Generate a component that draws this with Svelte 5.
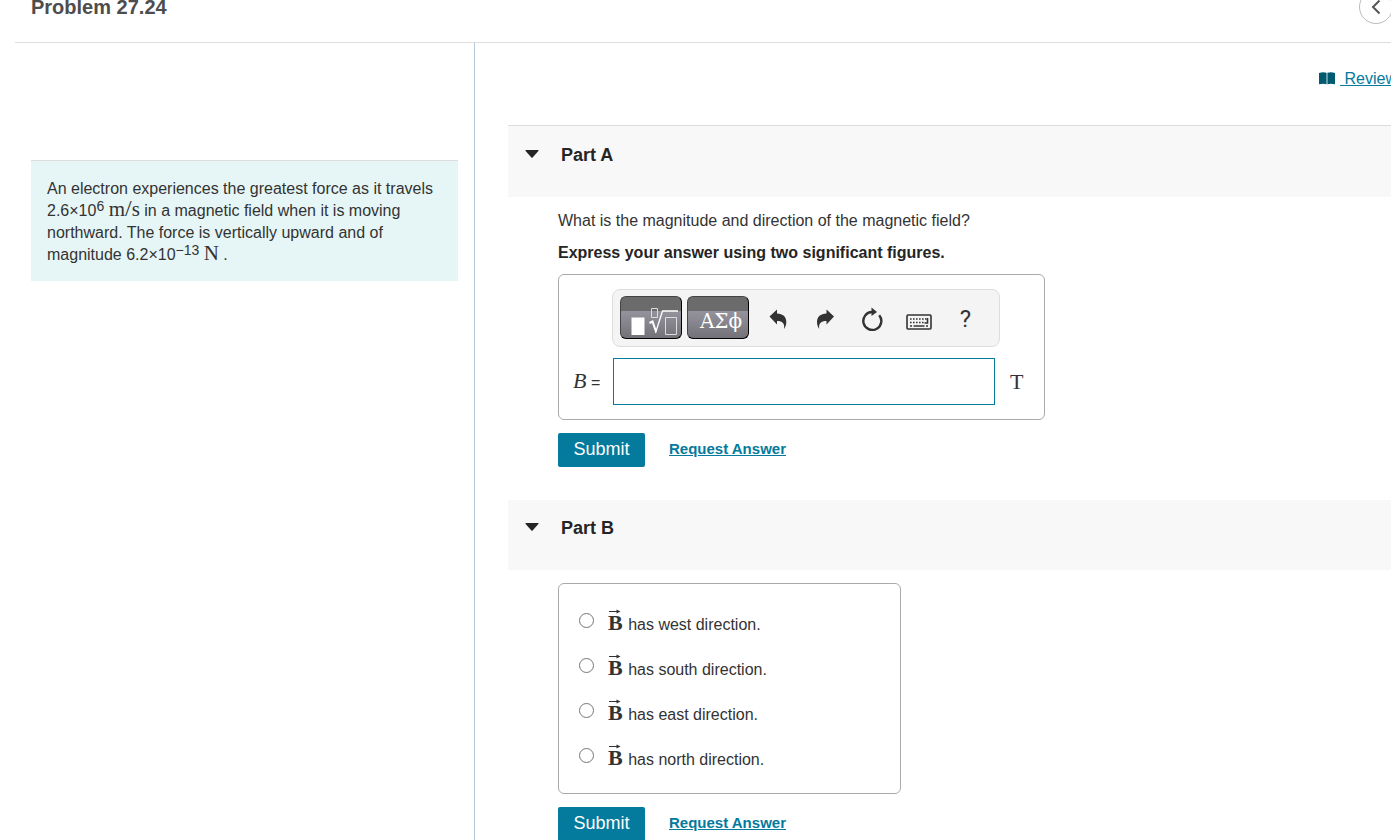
<script lang="ts">
  const directions = ['west', 'south', 'east', 'north'];

  let answer = $state('');
  let direction = $state('');
  let openA = $state(true);
  let openB = $state(true);
</script>

{#snippet partHeader(title: string, open: boolean, toggle: () => void)}
  <h2 class="part-header">
    <button type="button" class="part-toggle" aria-expanded={open} onclick={toggle}>
      <svg class="caret" width="14" height="8" viewBox="0 0 14 8" aria-hidden="true">
        <path d="M1 0h12q1 .2 .4 1L7.600 7.500q-.6.6-1.200 0L.6 1Q0 .2 1 0z" fill="currentColor" />
      </svg>
      {title}
    </button>
  </h2>
{/snippet}

{#snippet actions()}
  <div class="actions">
    <button type="submit" class="submit">Submit</button>
    <a href="#request" class="request">Request Answer</a>
  </div>
{/snippet}

<div class="page">
  <header class="top">
    <h1>Problem 27.24</h1>
    <button type="button" class="prev" aria-label="Previous problem">
      <svg width="10" height="16" viewBox="0 0 10 16" fill="none" stroke="currentColor" stroke-width="2">
        <path d="M8.500 1.500 2 8l6.500 6.500" />
      </svg>
    </button>
  </header>

  <div class="columns">
    <aside>
      <p class="statement">
        An electron experiences the greatest force as it travels 2.6×10<sup>6</sup>
        <span class="math">m<span class="slash">/</span>s</span> in a magnetic field when it is moving northward. The force is vertically
        upward and of magnitude 6.2×10<sup>−13</sup> <span class="math">N</span> .
      </p>
    </aside>

    <main>
      <div class="review">
        <svg width="16" height="13" viewBox="0 0 16 13" aria-hidden="true">
          <path d="M0 1Q4-.4 7.600 .8v11.400Q4 11.300 0 12.300zM16 1Q12-.4 8.400 .8v11.400Q12 11.300 16 12.300z" fill="#005a70" />
        </svg>
        <a href="#review">&nbsp;Review</a>
      </div>

      <section class="part first">
        {@render partHeader('Part A', openA, () => (openA = !openA))}
        {#if openA}
          <form class="part-body" onsubmit={(e) => e.preventDefault()}>
            <p>What is the magnitude and direction of the magnetic field?</p>
            <p class="hint">Express your answer using two significant figures.</p>
            <div class="answer-box">
              <div class="toolbar">
                <button type="button" class="palette" aria-label="Templates">
                  <svg width="60" height="41" viewBox="0 0 60 41" fill="none" stroke="#fff">
                    <path d="M10.500 20.500h13v17.500h-13z" fill="#fff" stroke="none" />
                    <path d="M30.500 11.500h6v9h-6z" stroke="#ddd" />
                    <path d="M28.500 26l3-1.500 3.500 10" stroke-width="2" />
                    <path d="M34.500 36 41.500 14H57" stroke-width="1.300" />
                    <path d="M44.500 20.500h11v17h-11z" stroke="#ddd" />
                  </svg>
                </button>
                <button type="button" class="palette greek" aria-label="Symbols">ΑΣϕ</button>
                <button type="button" class="tool" aria-label="Undo">
                  <svg width="18" height="20" viewBox="0 0 18 20" fill="currentColor">
                    <path d="M.5 7.500 8 .5v4c6 .2 9.300 3.300 9.300 8.500 0 2.600-.8 5-2.300 7 1-5.500-1.500-8-7-8v3.500z" />
                  </svg>
                </button>
                <button type="button" class="tool" aria-label="Redo">
                  <svg width="18" height="20" viewBox="0 0 18 20" fill="currentColor">
                    <path d="M18 7.500 10.500 .5v4C4.500 4.700 1 7.800 1 13c0 2.600.8 5 2.300 7-1-5.500 1.700-8 7.200-8v3.500z" />
                  </svg>
                </button>
                <button type="button" class="tool" aria-label="Reset">
                  <svg width="22" height="24" viewBox="0 0 22 24">
                    <path d="M18.200 8.200A9 9 0 1 1 11 5" fill="none" stroke="currentColor" stroke-width="2.400" />
                    <path d="M10.500 .5l5.500 4.500-5.500 4z" fill="currentColor" />
                  </svg>
                </button>
                <button type="button" class="tool" aria-label="Keyboard shortcuts">
                  <svg class="keyboard" width="26" height="16" viewBox="0 0 26 16" fill="none" stroke="currentColor">
                    <rect x="1" y="1" width="24" height="14" rx="1" stroke-width="1.600" />
                    <path d="M4 5h17M4 8.500h15" stroke-width="1.600" stroke-dasharray="1.600 1.400" />
                    <path d="M21.500 4v5h-3M4 12h2M7.500 12h11M20 12h2" stroke-width="1.600" />
                  </svg>
                </button>
                <button type="button" class="tool help" aria-label="Help">?</button>
              </div>
              <div class="entry">
                <label for="answer"><i>B</i> =</label>
                <input id="answer" type="text" bind:value={answer} />
                <span class="unit">T</span>
              </div>
            </div>
            {@render actions()}
          </form>
        {/if}
      </section>

      <section class="part">
        {@render partHeader('Part B', openB, () => (openB = !openB))}
        {#if openB}
          <form class="part-body" onsubmit={(e) => e.preventDefault()}>
            <div class="choices">
              {#each directions as d}
                <label class="choice">
                  <input type="radio" name="direction" value={d} bind:group={direction} />
                  <span class="choice-text">
                    <span class="vector">B<svg width="12" height="5" viewBox="0 0 12 5" aria-hidden="true">
                        <path d="M0 2.500h9" stroke="currentColor" />
                        <path d="M7.500 .5l4 2-4 2z" fill="currentColor" />
                      </svg></span>
                    has {d} direction.
                  </span>
                </label>
              {/each}
            </div>
            {@render actions()}
          </form>
        {/if}
      </section>
    </main>
  </div>
</div>

<style>
  :global(body) {
    margin: 0;
    background: #fff;
  }

  .page {
    display: flex;
    flex-direction: column;
    height: 100vh;
    overflow: hidden;
    padding-left: 15px;
    font-family: "Liberation Sans", Arial, sans-serif;
    font-size: 16px;
    line-height: 22px;
    color: #333;
  }

  button {
    font-family: inherit;
    padding: 0;
    border: 0;
    background: none;
    color: inherit;
    cursor: pointer;
  }

  a {
    color: #047a9c;
  }

  p {
    margin: 0;
  }

  .top {
    display: flex;
    flex: none;
    align-items: center;
    justify-content: space-between;
    height: 14px;
    padding: 0 0 28px 16px;
    border-bottom: 1px solid #ddd;
  }

  h1 {
    margin: 0;
    font-size: 20px;
    line-height: 14px;
    color: #4d4d4d;
  }

  .prev {
    display: flex;
    flex: none;
    align-items: center;
    justify-content: center;
    width: 34px;
    height: 34px;
    margin-right: -2px;
    box-sizing: border-box;
    border: 1px solid #bbb;
    border-radius: 50%;
    color: #555;
  }

  .columns {
    display: flex;
    flex: 1;
  }

  aside {
    flex: 0 0 460px;
    box-sizing: border-box;
    padding: 117px 16px 0;
    border-right: 1px solid #b4c8d8;
  }

  .statement {
    padding: 17px 16px 15px;
    border-top: 1px solid #ddd;
    background: #e6f6f6;
  }

  sup {
    font-size: 14px;
    line-height: 12px;
    vertical-align: 5px;
  }

  .math {
    font-family: "Liberation Serif", serif;
    font-size: 21px;
    line-height: 16px;
  }

  .slash {
    font-size: 24px;
  }

  main {
    flex: 1;
    min-width: 0;
    padding-left: 33px;
  }

  .review {
    display: flex;
    align-items: center;
    justify-content: flex-end;
    gap: 5px;
    margin-right: -6px;
    padding: 25px 0 35px;
  }

  .review svg {
    margin-bottom: 2px;
  }

  .part-header {
    height: 70px;
    margin: 0;
    box-sizing: border-box;
    padding: 17px;
    background: #f8f8f8;
    font-size: 18px;
    line-height: 22px;
  }

  .first .part-header {
    height: 72px;
    padding-top: 18px;
    border-top: 1px solid #ddd;
  }

  .part-toggle {
    display: flex;
    align-items: center;
    gap: 22px;
    font-size: 18px;
    font-weight: bold;
    line-height: 22px;
    color: #252525;
  }

  .caret {
    margin-bottom: 2px;
  }

  .part-body {
    padding: 13px 0 33px 50px;
  }

  .hint {
    margin: 10px 0;
    font-weight: bold;
    color: #252525;
  }

  .answer-box {
    width: fit-content;
    padding: 14px 20px 14px 14px;
    border: 1px solid #aaa;
    border-radius: 6px;
  }

  .toolbar {
    display: flex;
    align-items: flex-start;
    width: 388px;
    height: 58px;
    margin: 0 24px 11px 39px;
    padding: 6px 7px;
    box-sizing: border-box;
    border: 1px solid #ddd;
    border-radius: 8px;
    background: #f4f4f4;
  }

  .palette {
    display: flex;
    flex: none;
    align-items: center;
    justify-content: center;
    width: 62px;
    height: 43px;
    margin-right: 5px;
    box-sizing: border-box;
    border: 1px solid #000;
    border-top-color: #444;
    border-left-color: #444;
    border-radius: 6px;
    background: linear-gradient(#6b6b6b 0, #6b6b6b 35%, #94929c 35%, #747278 100%);
    color: #fff;
  }

  .greek {
    padding: 6px 0 0 6px;
    font-family: "DejaVu Serif", serif;
    font-size: 20px;
  }

  .tool {
    display: flex;
    flex: none;
    align-items: center;
    justify-content: center;
    width: 47px;
    height: 45px;
    color: #333;
  }

  .keyboard {
    margin-top: 6px;
  }

  .help {
    font-family: Roboto, sans-serif;
    font-size: 24px;
  }

  .entry {
    display: flex;
    align-items: center;
  }

  .entry label {
    width: 40px;
    white-space: nowrap;
  }

  .entry i,
  .unit {
    font-family: "Liberation Serif", serif;
    font-size: 22px;
  }

  .entry input {
    width: 382px;
    height: 47px;
    margin-right: 15px;
    padding: 0 8px;
    box-sizing: border-box;
    border: 1px solid #047a9c;
    font: inherit;
  }

  .actions {
    display: flex;
    gap: 24px;
    margin-top: 13px;
    line-height: 32px;
  }

  .submit {
    width: 87px;
    height: 34px;
    padding-bottom: 2px;
    border-radius: 2px;
    background: #047a9c;
    font-size: 18px;
    color: #fff;
  }

  .request {
    font-size: 15px;
    font-weight: bold;
  }

  .choices {
    display: flex;
    flex-direction: column;
    gap: 21px;
    width: fit-content;
    min-width: 343px;
    box-sizing: border-box;
    padding: 29px 20px 21px;
    border: 1px solid #aaa;
    border-radius: 6px;
  }

  .choice {
    display: flex;
    align-items: flex-start;
    gap: 14px;
    line-height: 24px;
  }

  .choice input {
    width: 15px;
    height: 15px;
    margin: 0;
  }

  .vector {
    position: relative;
    margin-right: 1px;
    font-family: "Liberation Serif", serif;
    font-size: 22px;
    font-weight: bold;
    line-height: 16px;
  }

  .vector svg {
    position: absolute;
    top: -1px;
    left: 1px;
  }
</style>
